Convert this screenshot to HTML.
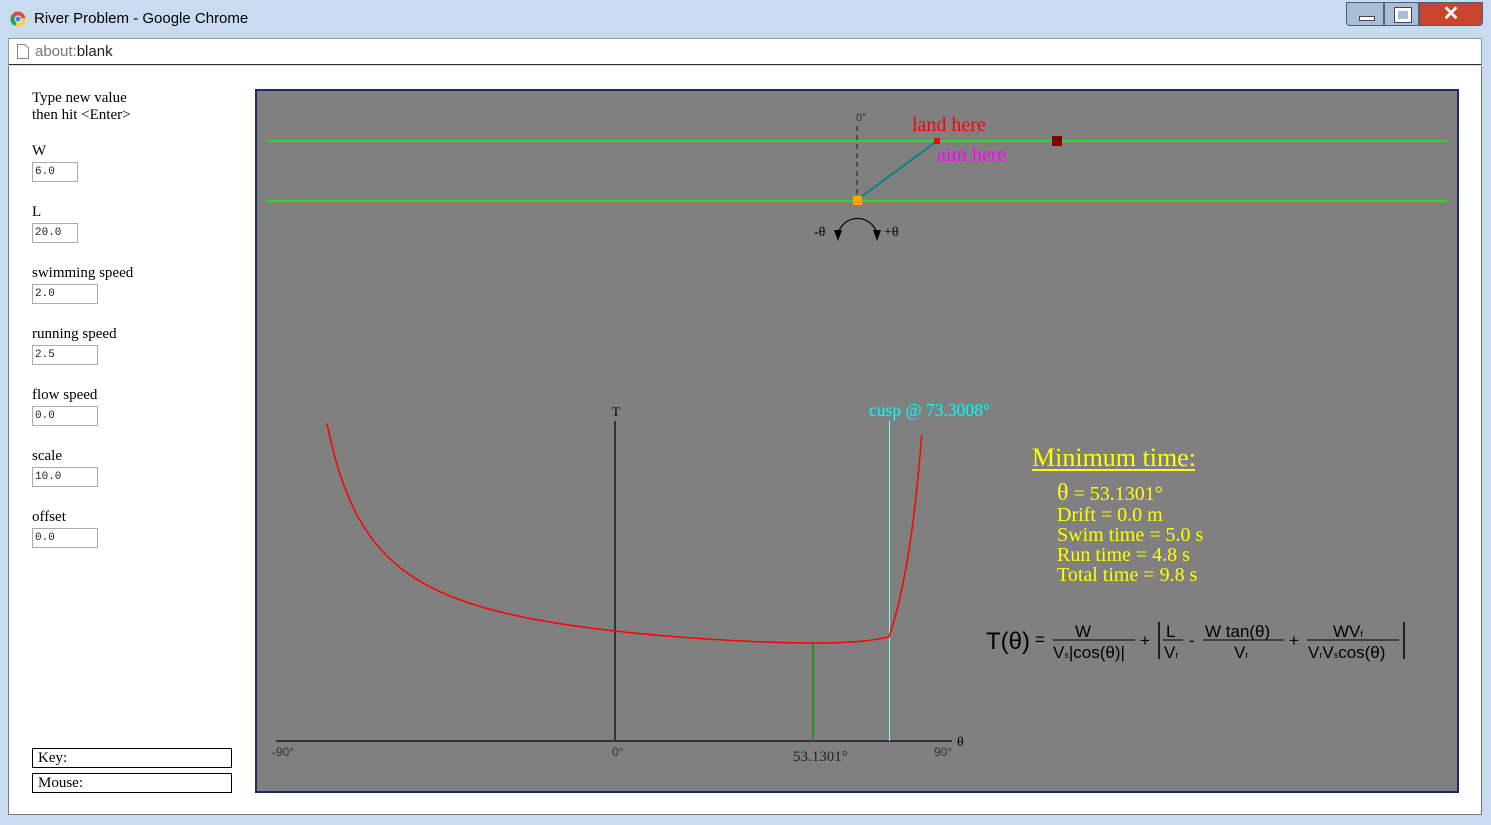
<!DOCTYPE html>
<html><head><meta charset="utf-8"><style>
body{margin:0;width:1491px;height:825px;overflow:hidden;background:#c9dcef;font-family:"Liberation Serif",serif;position:relative}
.title{position:absolute;left:34px;top:10px;font:15px "Liberation Sans",sans-serif;color:#000}
.addr{position:absolute;left:8px;top:38px;width:1474px;height:27px;background:#fff;border:1px solid #8a9aab;border-bottom:1px solid #333;box-sizing:border-box}
.addr span{position:absolute;left:26px;top:4px;font:15px "Liberation Sans",sans-serif;color:#222}
.content{position:absolute;left:8px;top:66px;width:1474px;height:749px;background:#fff;border-left:1px solid #777;border-right:1px solid #777;border-bottom:1px solid #777;box-sizing:border-box}
.lbl{position:absolute;left:32px;font-size:15px;color:#000}
.inp{position:absolute;left:32px;height:20px;border:1px solid #aaa;box-sizing:border-box;font:11px "Liberation Mono",monospace;padding:3px 2px;color:#222}
.box{position:absolute;left:32px;width:200px;height:20px;border:1px solid #000;box-sizing:border-box;font-size:15px;padding:0 5px;line-height:18px}
.btn{position:absolute;top:2px;height:24px;border:1px solid #4a5e78;box-sizing:border-box}
</style></head><body>
<svg style="position:absolute;left:10px;top:11px" width="16" height="16"><circle cx="8" cy="8" r="7.5" fill="#dd4b39"/><path d="M8 8 L1.5 4.5 A7.5 7.5 0 0 0 5 15 Z" fill="#1da362"/><path d="M8 8 L5 15 A7.5 7.5 0 0 0 15.5 7 Z" fill="#ffcd40"/><circle cx="8" cy="8" r="3.5" fill="#fff"/><circle cx="8" cy="8" r="2.6" fill="#4285f4"/></svg>
<div class="title">River Problem - Google Chrome</div>
<div class="btn" style="left:1346px;width:38px;background:#a9bed6;border-radius:0 0 0 4px"><div style="position:absolute;left:12px;top:13px;width:14px;height:3px;background:#fff;border:1px solid #445"></div></div>
<div class="btn" style="left:1384px;width:35px;background:#a9bed6"><div style="position:absolute;left:10px;top:5px;width:10px;height:8px;border:3px solid #fff;outline:1px solid #445"></div></div>
<div class="btn" style="left:1419px;width:64px;background:#c9462c;border-radius:0 0 4px 0;color:#fff;font:bold 20px 'Liberation Sans',sans-serif;text-align:center;line-height:22px">✕</div>
<div class="addr"><svg style="position:absolute;left:8px;top:5px" width="12" height="15"><path d="M0.5 0.5H8L11.5 4V14.5H0.5Z" fill="#fff" stroke="#888"/></svg><span><span style="position:static;color:#777">about:</span>blank</span></div>
<div class="content"></div>
<div class="lbl" style="top:90px;line-height:17px">Type new value<br>then hit &lt;Enter&gt;</div>
<div class="lbl" style="top:143px">W</div><div class="inp" style="top:162px;width:46px">6.0</div>
<div class="lbl" style="top:204px">L</div><div class="inp" style="top:223px;width:46px">20.0</div>
<div class="lbl" style="top:265px">swimming speed</div><div class="inp" style="top:284px;width:66px">2.0</div>
<div class="lbl" style="top:326px">running speed</div><div class="inp" style="top:345px;width:66px">2.5</div>
<div class="lbl" style="top:387px">flow speed</div><div class="inp" style="top:406px;width:66px">0.0</div>
<div class="lbl" style="top:448px">scale</div><div class="inp" style="top:467px;width:66px">10.0</div>
<div class="lbl" style="top:509px">offset</div><div class="inp" style="top:528px;width:66px">0.0</div>
<div class="box" style="top:748px">Key:</div>
<div class="box" style="top:773px">Mouse:</div>
<svg style="position:absolute;left:0;top:0" width="1491" height="825">
<rect x="256" y="90" width="1202" height="702" fill="#808080" stroke="#1c2a6a" stroke-width="2"/>
<line x1="267" y1="141" x2="1447" y2="141" stroke="#00ff00" stroke-width="1.5"/>
<line x1="267" y1="201" x2="1447" y2="201" stroke="#00ff00" stroke-width="1.5"/>
<line x1="857" y1="126" x2="857" y2="201" stroke="#333" stroke-dasharray="5,4" stroke-width="1.3"/>
<text x="856" y="121" font-size="11" fill="#333" font-family="Liberation Sans">0°</text>
<line x1="857" y1="200" x2="937" y2="141" stroke="#00868b" stroke-width="2"/>
<rect x="853" y="196" width="9" height="9" fill="#ffa500"/>
<rect x="934" y="138" width="6" height="6" fill="#f00"/>
<rect x="1052" y="136" width="10" height="10" fill="#800000"/>
<text x="912" y="131" font-size="20" fill="#f00">land here</text>
<text x="937" y="161" font-size="20" fill="#f0f">aim here</text>
<path d="M838 234 A20 20 0 0 1 877 234" fill="none" stroke="#000" stroke-width="1.2"/>
<path d="M834 230 L842 230 L838 241Z M873 230 L881 230 L877 241Z" fill="#000"/>
<text x="814" y="236" font-size="14" fill="#000">-θ</text>
<text x="884" y="236" font-size="14" fill="#000">+θ</text>
<line x1="276" y1="741" x2="952" y2="741" stroke="#333" stroke-width="2"/>
<line x1="615" y1="421" x2="615" y2="741" stroke="#333" stroke-width="2"/>
<text x="612" y="416" font-size="13" fill="#000">T</text>
<text x="957" y="746" font-size="14" fill="#000">θ</text>
<line x1="813" y1="643" x2="813" y2="741" stroke="#2f8a2f" stroke-width="2"/>
<line x1="889.5" y1="421" x2="889.5" y2="741" stroke="#7ff" stroke-width="1"/>
<text x="869" y="416" font-size="17.5" fill="#0ff">cusp @ 73.3008°</text>
<text x="272" y="756" font-size="12" fill="#333" font-family="Liberation Sans">-90°</text>
<text x="612" y="756" font-size="12" fill="#333" font-family="Liberation Sans">0°</text>
<text x="934" y="756" font-size="12" fill="#333" font-family="Liberation Sans">90°</text>
<text x="793" y="761" font-size="15" fill="#222">53.1301°</text>
<path id="curve" d="" fill="none" stroke="#f00" stroke-width="1.5"/>
<text x="1032" y="466" font-size="26" fill="#ff0">Minimum time:</text>
<line x1="1032" y1="470" x2="1195" y2="470" stroke="#ff0" stroke-width="2"/>
<g font-size="20" fill="#ff0"><text x="1057" y="500"><tspan font-size="24">θ</tspan> = 53.1301°</text>
<text x="1057" y="521">Drift = 0.0 m</text><text x="1057" y="541">Swim time = 5.0 s</text>
<text x="1057" y="561">Run time = 4.8 s</text><text x="1057" y="581">Total time = 9.8 s</text></g>
<g font-family="Liberation Sans" fill="#000">
<text x="986" y="649" font-size="24">T(θ)</text><text x="1035" y="645" font-size="17">=</text>
<text x="1075" y="637" font-size="17">W</text><line x1="1053" y1="640" x2="1135" y2="640" stroke="#000"/>
<text x="1053" y="658" font-size="17">V<tspan font-size="9">s</tspan>|cos(θ)|</text>
<text x="1140" y="646" font-size="17">+</text>
<line x1="1159" y1="622" x2="1159" y2="659" stroke="#000" stroke-width="1.5"/>
<text x="1166" y="637" font-size="17">L</text><line x1="1163" y1="640" x2="1183" y2="640" stroke="#000"/>
<text x="1164" y="658" font-size="17">V<tspan font-size="9">r</tspan></text>
<text x="1189" y="646" font-size="17">-</text>
<text x="1205" y="637" font-size="17">W tan(θ)</text><line x1="1203" y1="640" x2="1284" y2="640" stroke="#000"/>
<text x="1234" y="658" font-size="17">V<tspan font-size="9">r</tspan></text>
<text x="1289" y="646" font-size="17">+</text>
<text x="1333" y="637" font-size="17">WV<tspan font-size="9">f</tspan></text><line x1="1307" y1="640" x2="1399" y2="640" stroke="#000"/>
<text x="1308" y="658" font-size="17">V<tspan font-size="9">r</tspan>V<tspan font-size="9">s</tspan>cos(θ)</text>
<line x1="1404" y1="622" x2="1404" y2="659" stroke="#000" stroke-width="1.5"/>
</g>
</svg>
<script>
var d="",first=true;
for(var t=-77.2;t<=82.2;t+=0.2){var r=t*Math.PI/180;var T=3/Math.cos(r)+Math.abs(20-6*Math.tan(r))/2.5;
var x=615+t*3.74,y=741-10*T;if(y<420)continue;d+=(first?"M":"L")+x.toFixed(1)+" "+y.toFixed(1);first=false;}
document.getElementById("curve").setAttribute("d",d);
</script>
</body></html>
